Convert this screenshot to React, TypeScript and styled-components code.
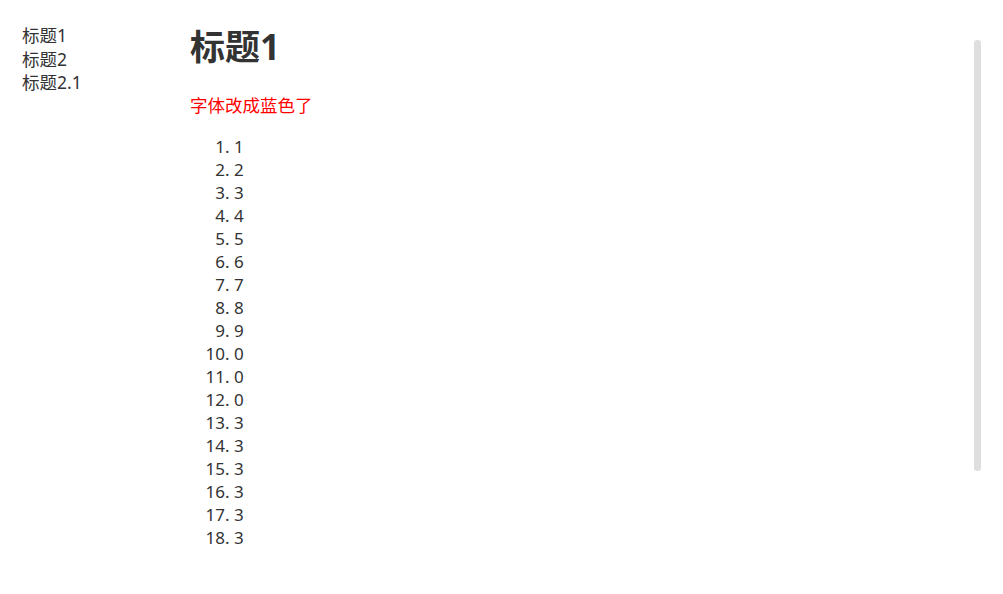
import React from 'react';
import styled, { createGlobalStyle } from 'styled-components';

const GlobalStyle = createGlobalStyle`
  html, body {
    margin: 0;
    padding: 0;
    background: #fff;
  }

  body {
    font-family: 'Noto Sans', 'Noto Sans CJK SC', sans-serif;
    color: #333;
  }
`;

const tocItems = ['标题1', '标题2', '标题2.1'];
const listItems = ['1', '2', '3', '4', '5', '6', '7', '8', '9', '0', '0', '0', '3', '3', '3', '3', '3', '3'];

export default function App(): JSX.Element {
  return (
    <>
      <GlobalStyle />
      <Page>
        <Toc>
          {tocItems.map((item) => (
            <TocItem key={item}>{item}</TocItem>
          ))}
        </Toc>

        <Content>
          <Title>标题1</Title>
          <Notice>字体改成蓝色了</Notice>
          <List>
            {listItems.map((item, index) => (
              <ListItem key={index}>{item}</ListItem>
            ))}
          </List>
        </Content>
      </Page>
      <ScrollThumb />
    </>
  );
}

const Page = styled.div`
  display: flex;
  padding: 24px 0 0 22px;
  height: 594px;
  box-sizing: border-box;
`;

const Toc = styled.nav`
  display: flex;
  flex-direction: column;
  width: 168px;
  flex-shrink: 0;
`;

const TocItem = styled.div`
  font-size: 17.5px;
  line-height: 23.5px;
  color: #333;
`;

const Content = styled.main`
  flex: 1;
  padding-top: 3px;
`;

const Title = styled.h1`
  margin: 0;
  font-size: 35px;
  line-height: 40px;
  font-weight: 700;
  color: #333;
`;

const Notice = styled.p`
  margin: 27px 0 0;
  font-size: 17.5px;
  line-height: 23px;
  color: #f00;
`;

const List = styled.ol`
  margin: 17.5px 0 0;
  padding-left: 44px;
`;

const ListItem = styled.li`
  font-size: 17px;
  line-height: 23px;
  color: #333;
`;

const ScrollThumb = styled.div`
  position: fixed;
  top: 40px;
  left: 974px;
  width: 7px;
  height: 431px;
  border-radius: 3px;
  background: #dedede;
`;
